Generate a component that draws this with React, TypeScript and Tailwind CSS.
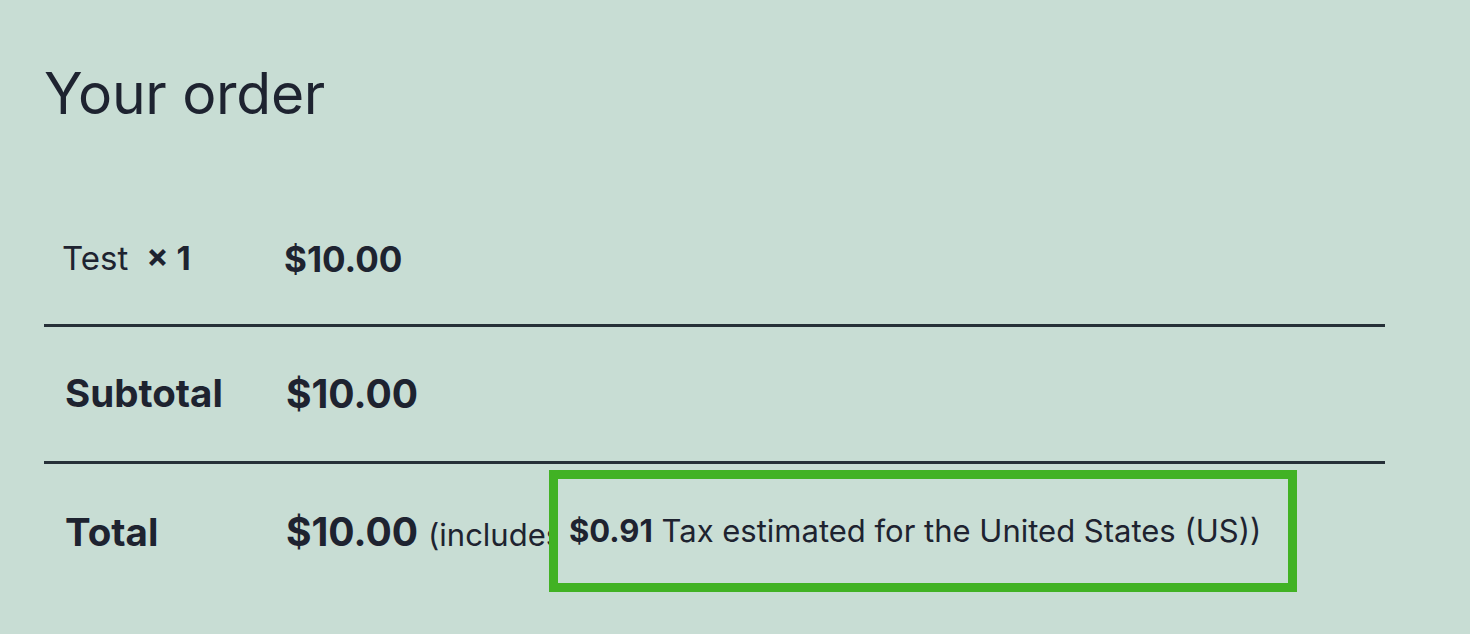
const font = { fontFamily: "Inter, 'Noto Sans', sans-serif" };

const rows = [
  { label: "Test", qty: "× 1", price: "$10.00", kind: "item" },
  { label: "Subtotal", price: "$10.00", kind: "sub" },
];

export default function App() {
  return (
    <div className="min-h-[634px] w-full bg-[#c8ddd4] text-[#1e2330]" style={font}>
      <div className="pl-[44px] pr-[85px] pt-[58px]">
        <h1 className="text-[57px] font-normal leading-[72px] tracking-[-0.3px]">Your order</h1>

        <div className="mt-[60px]">
          {rows.map((r) => (
            <div key={r.label} className="flex h-[137px] items-center border-b-[3px] border-[#263038]">
              {r.kind === "item" ? (
                <>
                  <div className="w-[240px] pl-[18px] pt-[4px] text-[33px]">
                    {r.label}
                    <span className="ml-[18px] font-bold">{r.qty}</span>
                  </div>
                  <div className="pt-[4px] text-[35px] font-bold">{r.price}</div>
                </>
              ) : (
                <>
                  <div className="w-[242px] pl-[21px] text-[38.5px] font-bold">{r.label}</div>
                  <div className="text-[39px] font-bold">{r.price}</div>
                </>
              )}
            </div>
          ))}

          <div className="relative flex h-[137px] items-center">
            <div className="w-[242px] pl-[21px] text-[38.5px] font-bold">Total</div>
            <div className="flex items-baseline">
              <span className="text-[39px] font-bold">$10.00</span>
              <span className="ml-[10px] text-[31px]">(includes</span>
            </div>
            <div className="absolute left-[505px] top-[6px] flex h-[122px] w-[748px] items-center border-[9px] border-[#41b224] bg-[#c9ded5] pl-[11px]">
              <span className="text-[31px]">
                <span className="font-bold">$0.91</span> Tax estimated for the United States (US))
              </span>
            </div>
          </div>
        </div>
      </div>
    </div>
  );
}
